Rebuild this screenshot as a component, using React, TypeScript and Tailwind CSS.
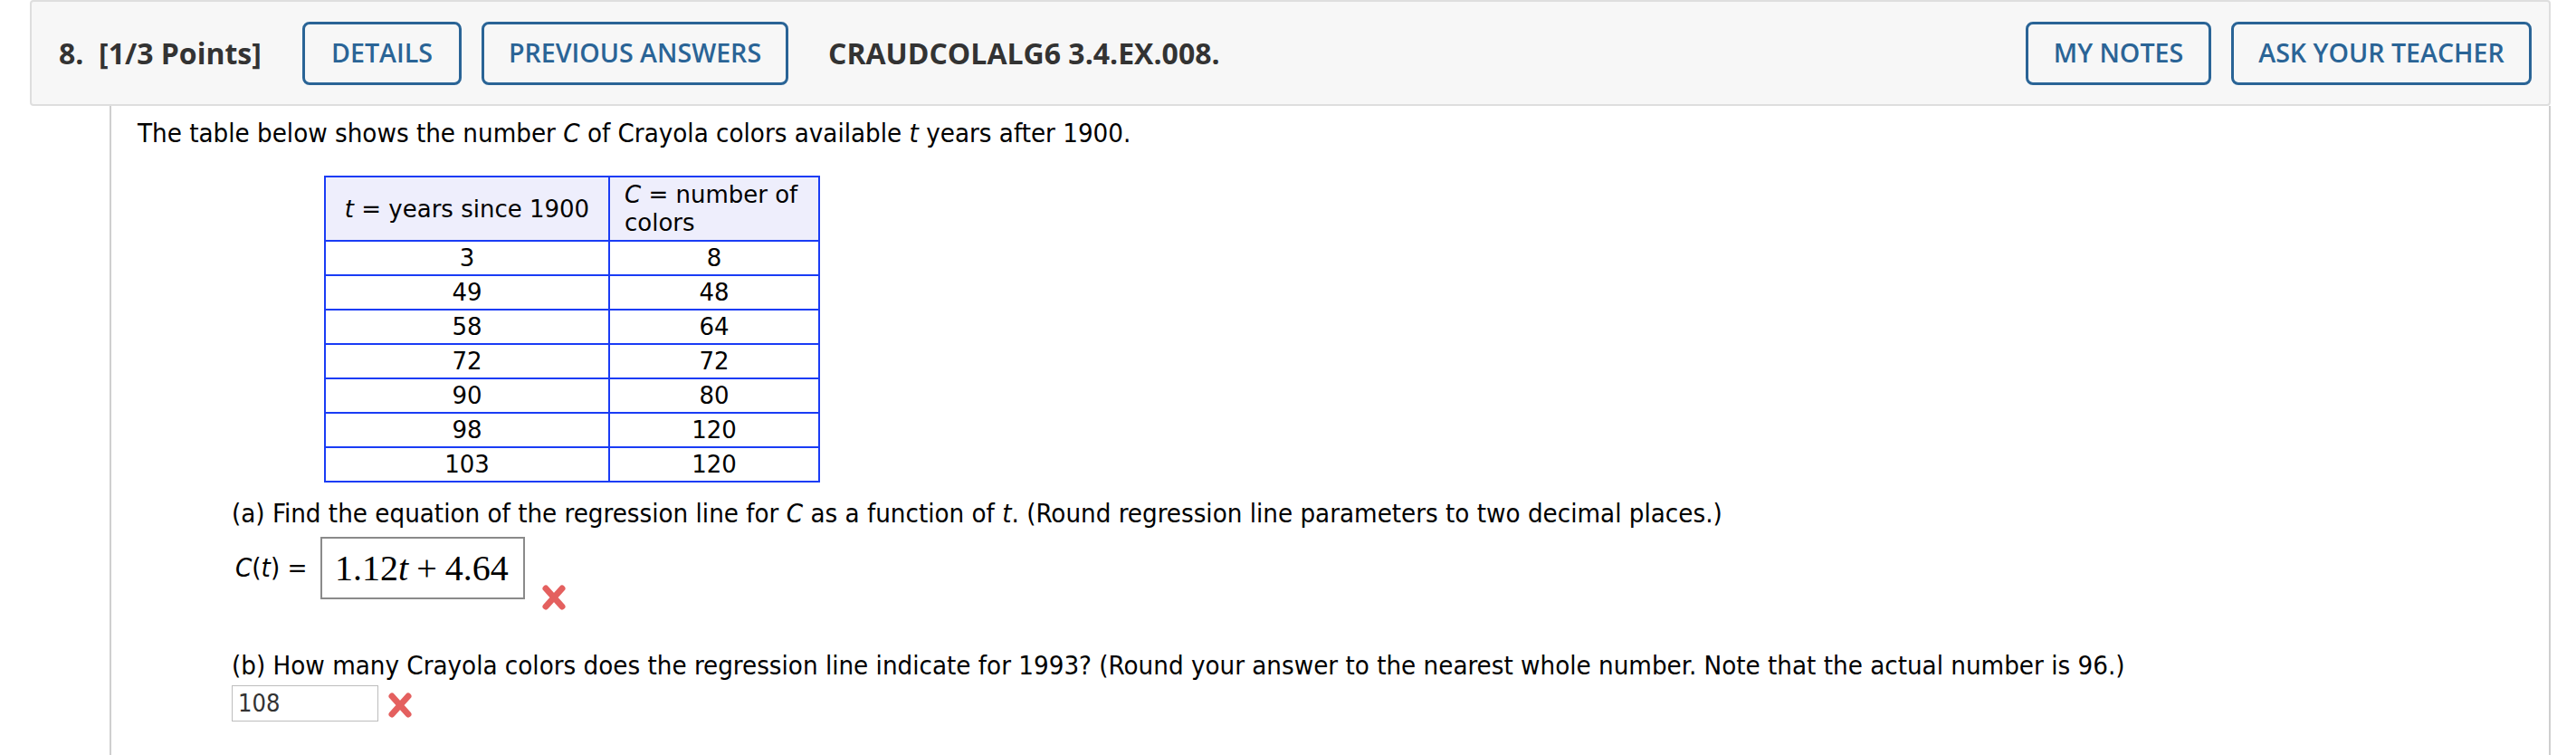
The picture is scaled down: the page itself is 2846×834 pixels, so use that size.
import React from 'react';

const ROWS: [number, number][] = [
  [3, 8],
  [49, 48],
  [58, 64],
  [72, 72],
  [90, 80],
  [98, 120],
  [103, 120],
];

const WrongMark: React.FC = () => (
  <svg width="30" height="30" viewBox="0 0 30 30" className="shrink-0">
    <path d="M6 5 L24 25 M24 5 L6 25" stroke="#e4605f" strokeWidth="7" strokeLinecap="round" fill="none" />
  </svg>
);

const HeaderButton: React.FC<{ label: string; width: string }> = ({ label, width }) => (
  <button
    className={`${width} h-[70px] shrink-0 rounded-[8px] border-[3px] border-[#2a6496] bg-transparent text-[28.6px] font-semibold text-[#2a6496]`}
  >
    {label}
  </button>
);

const App: React.FC = () => {
  return (
    <div className="w-[2846px] h-[834px] overflow-hidden bg-white">
      {/* question header */}
      <div className="ml-[33px] w-[2785px] h-[117px] flex items-center rounded-[4px] border-2 border-[#dedede] bg-[#f7f7f7] pl-[30px] pr-[19px] font-['Open_Sans',sans-serif]">
        <div className="w-[269px] shrink-0 text-[32px] font-bold text-[#333] whitespace-pre">8.  [1/3 Points]</div>
        <HeaderButton label="DETAILS" width="w-[176px]" />
        <div className="w-[22px] shrink-0" />
        <HeaderButton label="PREVIOUS ANSWERS" width="w-[339px]" />
        <div className="ml-[44px] text-[32px] font-bold text-[#333]">CRAUDCOLALG6 3.4.EX.008.</div>
        <div className="flex-1" />
        <HeaderButton label="MY NOTES" width="w-[205px]" />
        <div className="w-[22px] shrink-0" />
        <HeaderButton label="ASK YOUR TEACHER" width="w-[332px]" />
      </div>

      {/* question body */}
      <div className="ml-[121px] w-[2697px] h-[717px] border-x-2 border-[#cfcfcf] pl-[29px] pt-[12px] text-black font-['Liberation_Sans_Narrow','DejaVu_Sans_Condensed',sans-serif] text-[29.2px] leading-[36px]">
        <p>
          The table below shows the number <i>C</i> of Crayola colors available <i>t</i> years after 1900.
        </p>

        <table className="ml-[206px] mt-[29px] border-collapse font-['DejaVu_Sans','Verdana',sans-serif] text-[26px] leading-none text-black">
          <thead>
            <tr className="h-[71px] bg-[#eeeefc]">
              <th className="w-[314px] border-2 border-[#1a3cf5] text-center font-normal">
                <i>t</i> = years since 1900
              </th>
              <th className="w-[232px] border-2 border-[#1a3cf5] pl-[16px] text-left font-normal leading-[31px]">
                <i>C</i> = number of
                <br />
                colors
              </th>
            </tr>
          </thead>
          <tbody>
            {ROWS.map(([t, c]) => (
              <tr key={t} className="h-[38px]">
                <td className="border-2 border-[#1a3cf5] text-center">{t}</td>
                <td className="border-2 border-[#1a3cf5] text-center">{c}</td>
              </tr>
            ))}
          </tbody>
        </table>

        <div className="ml-[104px]">
          <p className="mt-[16px]">
            (a) Find the equation of the regression line for <i>C</i> as a function of <i>t</i>. (Round regression line parameters to two decimal places.)
          </p>
          <div className="mt-[8px] flex items-start">
            <div className="mt-[16px] w-[98px] shrink-0 pl-[4px]">
              <i>C</i>(<i>t</i>) =
            </div>
            <div className="w-[226px] h-[69px] shrink-0 flex items-center border-2 border-[#8a8a8a] pl-[14px] font-['Liberation_Serif',serif] text-[40px] text-black">
              1.12<i>t</i>
              <span className="px-[9px]">+</span>
              4.64
            </div>
            <div className="ml-[17px] mt-[52px]">
              <WrongMark />
            </div>
          </div>

          <p className="mt-[42px]">
            (b) How many Crayola colors does the regression line indicate for 1993? (Round your answer to the nearest whole number. Note that the actual number is 96.)
          </p>
          <div className="mt-[4px] flex items-start">
            <div className="w-[162px] h-[40px] shrink-0 flex items-center border border-[#bdbdbd] pl-[6px] text-[27px] text-[#333]">
              108
            </div>
            <div className="ml-[9px] mt-[7px]">
              <WrongMark />
            </div>
          </div>
        </div>
      </div>
    </div>
  );
};

export default App;
